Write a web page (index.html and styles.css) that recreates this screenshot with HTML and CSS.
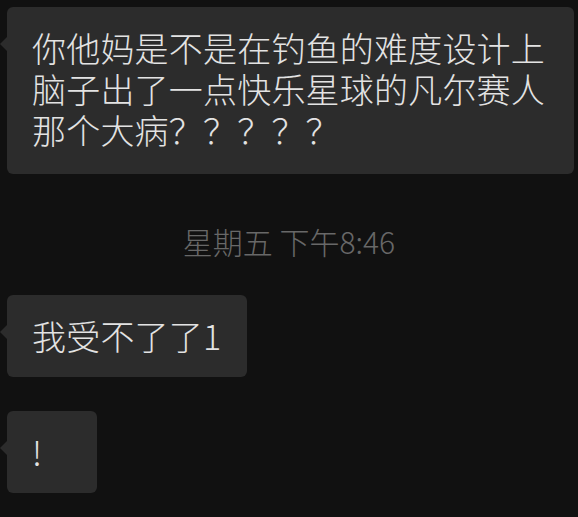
FILE: index.html
```html
<!DOCTYPE html>
<html lang="zh-CN">
<head>
<meta charset="utf-8">
<title>聊天</title>
<link rel="stylesheet" href="styles.css">
</head>
<body>
<main class="chat">
  <div class="msg">
    <div class="bubble wide">你他妈是不是在钓鱼的难度设计上脑子出了一点快乐星球的凡尔赛人那个大病？？？？？</div>
  </div>
  <div class="time">星期五 下午8:46</div>
  <div class="msg">
    <div class="bubble">我受不了了1</div>
  </div>
  <div class="msg gap">
    <div class="bubble">!</div>
  </div>
</main>
</body>
</html>
```
FILE: styles.css
```css
html, body {
  margin: 0;
  padding: 0;
  background: #111111;
}

.chat {
  display: flex;
  flex-direction: column;
  align-items: flex-start;
  padding-top: 7px;
  font-family: "Noto Sans CJK SC", "Noto Sans", sans-serif;
  color: #e3e3e3;
}

.msg {
  display: flex;
}

.msg.gap {
  margin-top: 34px;
}

.bubble {
  position: relative;
  margin-left: 7px;
  min-width: 90px;
  box-sizing: border-box;
  padding: 20px 26px 21px 25px;
  background: #2c2c2c;
  border-radius: 6px;
  font-size: 34px;
  font-weight: 300;
  line-height: 41px;
  letter-spacing: 0.2px;
}

.bubble.wide {
  width: 567px;
  padding-bottom: 24px;
}

/* little pointer on the left edge of an incoming bubble */
.bubble::before {
  content: "";
  position: absolute;
  left: -7px;
  top: 30px;
  border-style: solid;
  border-width: 7px 7px 7px 0;
  border-color: transparent #2c2c2c transparent transparent;
}

.time {
  align-self: center;
  margin: 51px 0 38px;
  font-size: 30px;
  font-weight: 300;
  line-height: 32px;
  color: #686868;
}
```
